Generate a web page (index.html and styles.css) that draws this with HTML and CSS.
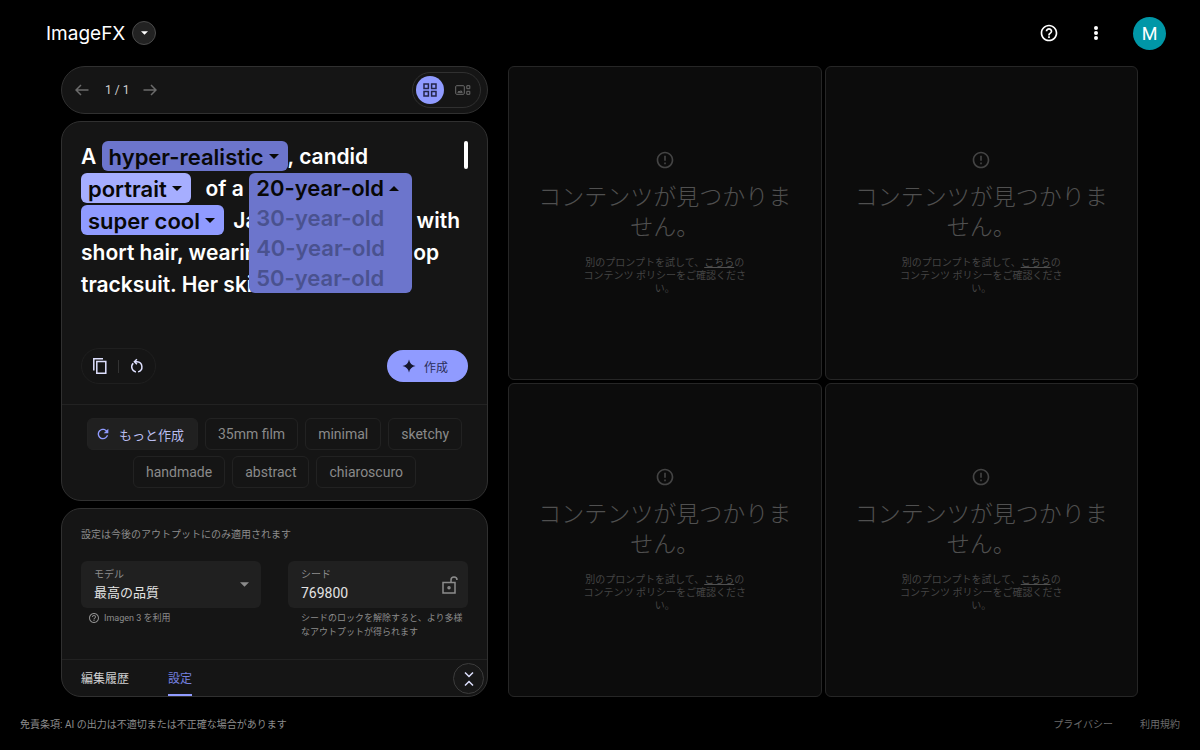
FILE: index.html
```
<!DOCTYPE html>
<html lang="ja">
<head>
	<meta charset="UTF-8">
	<meta name="viewport" content="width=device-width, initial-scale=1">
	<title>ImageFX</title>
	<link rel="stylesheet" href="styles.css">
</head>
<body>
	<!-- shared icons -->
	<svg class="sprite" width="0" height="0" aria-hidden="true">
		<symbol id="caret" viewBox="0 0 10 5"><path d="M0 0h10L5 5z"/></symbol>
		<symbol id="help" viewBox="0 0 24 24"><path d="M11 18h2v-2h-2v2zm1-16C6.480 2 2 6.480 2 12s4.480 10 10 10 10-4.480 10-10S17.520 2 12 2zm0 18c-4.410 0-8-3.590-8-8s3.590-8 8-8 8 3.590 8 8-3.590 8-8 8zm0-14c-2.210 0-4 1.790-4 4h2c0-1.100.9-2 2-2s2 .9 2 2c0 2-3 1.750-3 5h2c0-2.250 3-2.500 3-5 0-2.210-1.790-4-4-4z"/></symbol>
		<symbol id="error" viewBox="0 0 24 24"><path d="M11 15h2v2h-2zm0-8h2v6h-2zm1-5C6.470 2 2 6.500 2 12s4.470 10 10 10 10-4.480 10-10S17.520 2 12 2zm0 18c-4.420 0-8-3.580-8-8s3.580-8 8-8 8 3.580 8 8-3.580 8-8 8z"/></symbol>
	</svg>

	<header class="header">
		<span class="logo">ImageFX</span>
		<button class="logo-menu" aria-label="ツールを切り替え"><svg width="7" height="4"><use href="#caret"/></svg></button>
		<div class="header-right">
			<button class="icon-btn" aria-label="ヘルプ"><svg width="20" height="20"><use href="#help"/></svg></button>
			<button class="icon-btn" aria-label="メニュー">
				<svg width="20" height="20" viewBox="0 0 20 20"><circle cx="10" cy="5" r="2"/><circle cx="10" cy="10" r="2"/><circle cx="10" cy="15" r="2"/></svg>
			</button>
			<button class="avatar">M</button>
		</div>
	</header>

	<main class="main">
		<div class="side">
			<div class="card pager">
				<button class="icon-btn" aria-label="前へ">
					<svg class="line" width="14" height="14" viewBox="0 0 14 14"><path d="M13.500 7H1.200M6 2L1 7l5 5"/></svg>
				</button>
				<span class="count">1 / 1</span>
				<button class="icon-btn" aria-label="次へ">
					<svg class="line" width="14" height="14" viewBox="0 0 14 14"><path d="M.5 7h12.300M8 2l5 5-5 5"/></svg>
				</button>
				<div class="view">
					<button class="view-btn active" aria-label="グリッド表示">
						<svg class="line" width="14" height="14" viewBox="0 0 14 14"><path d="M1 1h4.400v4.400H1zM8.600 1H13v4.400H8.600zM1 8.600h4.400V13H1zM8.600 8.600H13V13H8.600z"/></svg>
					</button>
					<button class="view-btn" aria-label="詳細表示">
						<svg class="line thin" width="16" height="10" viewBox="0 0 16 10"><rect x=".7" y=".7" width="8.600" height="8.600" rx="1"/><path d="M11.800.7h3v3h-3zM11.800 6.300h3v3h-3zM2.800 7.300l1.200-1.200.9.8 1-1.200 1.400 1.600z"/></svg>
					</button>
				</div>
			</div>

			<section class="card prompt-card">
				<div class="prompt">
					<div class="prompt-text">
						A <span class="pick dim"><select aria-label="スタイル"><option>hyper-realistic</option></select><svg width="10" height="5"><use href="#caret"/></svg></span>, candid<br>
						<span class="pick light"><select aria-label="種類"><option>portrait</option></select><svg width="10" height="5"><use href="#caret"/></svg></span>&nbsp; of a
						<span class="open">
							<button class="open-btn" aria-haspopup="listbox" aria-expanded="true">20-year-old<svg class="up" width="10" height="5"><use href="#caret"/></svg></button>
							<ul class="menu" role="listbox" aria-label="年齢">
								<li role="option">30-year-old</li>
								<li role="option">40-year-old</li>
								<li role="option">50-year-old</li>
							</ul>
						</span><br>
						<span class="pick"><select aria-label="雰囲気"><option>super cool</option></select><svg width="10" height="5"><use href="#caret"/></svg></span>&nbsp;Japanese woman with<br>
						short hair, wearing a bright hip-hop<br>
						tracksuit. Her skin is
					</div>
					<div class="thumb"></div>
				</div>

				<div class="actions">
					<div class="tools">
						<button class="icon-btn" aria-label="コピー">
							<svg class="line" width="16" height="18" viewBox="0 0 16 18"><path d="M1.800 13.500V1.800H11M4.800 4.500h9v11.700h-9z"/></svg>
						</button>
						<span class="sep"></span>
						<button class="icon-btn" aria-label="リセット">
							<svg class="line" width="16" height="16" viewBox="0 0 16 16"><path d="M4.200 5.200A5.200 5.200 0 0 0 6.900 13.900M9.100 13.900A5.200 5.200 0 0 0 8 3.700H5.800M7.900 1.200L5.400 3.700l2.500 2.500"/></svg>
						</button>
					</div>
					<button class="create">
						<svg width="14" height="14" viewBox="0 0 14 14"><path d="M7 .5Q8 6 13.500 7 8 8 7 13.500 6 8 .5 7 6 6 7 .5z"/></svg>
						作成
					</button>
				</div>

				<div class="chips">
					<button class="chip more">
						<svg width="16" height="16" viewBox="0 0 24 24"><path d="M17.650 6.350C16.200 4.900 14.210 4 12 4c-4.420 0-7.990 3.580-7.990 8s3.570 8 7.990 8c3.730 0 6.840-2.550 7.730-6h-2.080c-.82 2.330-3.040 4-5.650 4-3.310 0-6-2.690-6-6s2.690-6 6-6c1.660 0 3.140.69 4.220 1.780L13 11h7V4l-2.350 2.350z"/></svg>
						もっと作成
					</button>
					<button class="chip">35mm film</button>
					<button class="chip">minimal</button>
					<button class="chip">sketchy</button>
					<button class="chip">handmade</button>
					<button class="chip">abstract</button>
					<button class="chip">chiaroscuro</button>
				</div>
			</section>

			<section class="card settings">
				<p class="note">設定は今後のアウトプットにのみ適用されます</p>
				<div class="fields">
					<div>
						<div class="field">
							<label for="model">モデル</label>
							<select id="model"><option>最高の品質</option></select>
							<svg class="field-icon" width="9" height="5"><use href="#caret"/></svg>
						</div>
						<p class="hint"><svg width="12" height="12"><use href="#help"/></svg>Imagen 3 を利用</p>
					</div>
					<div>
						<div class="field">
							<label for="seed">シード</label>
							<input id="seed" type="text" value="769800">
							<button class="icon-btn field-icon" aria-label="シードのロックを解除">
								<svg class="line" width="18" height="20" viewBox="0 0 18 20"><path d="M2 7.500h12V18H2zM10 7.500V5a3 3 0 0 1 6 0"/><circle cx="8" cy="12.700" r="1"/></svg>
							</button>
						</div>
						<p class="hint seed-hint">シードのロックを解除すると、より多様なアウトプットが得られます</p>
					</div>
				</div>
				<div class="tabs">
					<button class="tab">編集履歴</button>
					<button class="tab active">設定</button>
					<button class="collapse" aria-label="閉じる">
						<svg class="line" width="10" height="16" viewBox="0 0 10 16"><path d="M1 1.500l4 4 4-4M1 14.500l4-4 4 4"/></svg>
					</button>
				</div>
			</section>
		</div>

		<div class="results">
			<article class="result">
				<svg width="20" height="20"><use href="#error"/></svg>
				<h2>コンテンツが見つかりません。</h2>
				<p>別のプロンプトを試して、<a href="#">こちら</a>のコンテンツ ポリシーをご確認ください。</p>
			</article>
			<article class="result">
				<svg width="20" height="20"><use href="#error"/></svg>
				<h2>コンテンツが見つかりません。</h2>
				<p>別のプロンプトを試して、<a href="#">こちら</a>のコンテンツ ポリシーをご確認ください。</p>
			</article>
			<article class="result">
				<svg width="20" height="20"><use href="#error"/></svg>
				<h2>コンテンツが見つかりません。</h2>
				<p>別のプロンプトを試して、<a href="#">こちら</a>のコンテンツ ポリシーをご確認ください。</p>
			</article>
			<article class="result">
				<svg width="20" height="20"><use href="#error"/></svg>
				<h2>コンテンツが見つかりません。</h2>
				<p>別のプロンプトを試して、<a href="#">こちら</a>のコンテンツ ポリシーをご確認ください。</p>
			</article>
		</div>
	</main>

	<footer class="footer">
		<span>免責条項: AI の出力は不適切または不正確な場合があります</span>
		<nav>
			<a href="#">プライバシー</a>
			<a href="#">利用規約</a>
		</nav>
	</footer>
</body>
</html>
```
FILE: styles.css
```
* {
	box-sizing: border-box;
}
body {
	display: flex;
	flex-direction: column;
	min-height: 100vh;
	margin: 0;
	background: #000;
	color: #e3e3e3;
	font-family: Roboto, "Noto Sans CJK JP", sans-serif;
	font-size: 10px;
}
button, select, input {
	margin: 0;
	padding: 0;
	border: none;
	background: none;
	color: inherit;
	font: inherit;
}
select {
	appearance: none;
}
p, h2, ul {
	margin: 0;
	padding: 0;
}
svg {
	display: block;
	flex: none;
	fill: currentColor;
}
.sprite {
	position: absolute;
}
.line {
	fill: none;
	stroke: currentColor;
	stroke-width: 1.5;
}
.thin {
	stroke-width: 1;
}
.icon-btn {
	display: flex;
}

/* header */
.header {
	display: flex;
	align-items: center;
	height: 66px;
	padding: 0 34px 0 46px;
}
.logo {
	color: #fff;
	font-family: Inter, sans-serif;
	font-size: 19px;
	font-weight: 400;
}
.logo-menu {
	display: flex;
	align-items: center;
	justify-content: center;
	width: 24px;
	height: 24px;
	margin-left: 7px;
	border: 1px solid #4a4a4a;
	border-radius: 50%;
	background: #222;
	color: #fff;
}
.header-right {
	display: flex;
	align-items: center;
	gap: 27px;
	margin-left: auto;
	color: #fff;
}
.avatar {
	width: 33px;
	height: 33px;
	border-radius: 50%;
	background: #0097a7;
	font-size: 18px;
}

/* columns */
.main {
	display: grid;
	flex: 1;
	grid-template-columns: minmax(0, 427fr) minmax(0, 630fr);
	gap: 20px;
	padding: 0 62px 0 61px;
}
.side {
	display: flex;
	flex-direction: column;
	gap: 7px;
}
.card {
	border: 1px solid #303030;
	border-radius: 20px;
	background: #151515;
}

/* pager */
.pager {
	display: flex;
	align-items: center;
	padding: 5px 6px 5px 13px;
	border-radius: 24px;
	color: #6b6b6b;
}
.count {
	margin: 0 14px 0 16px;
	color: #d0d0d0;
	font-size: 12px;
}
.view {
	display: flex;
	gap: 5px;
	margin-left: auto;
	padding: 3px;
	border: 1px solid #303030;
	border-radius: 18px;
}
.view-btn {
	display: flex;
	align-items: center;
	justify-content: center;
	width: 28px;
	height: 28px;
	border-radius: 50%;
}
.view-btn.active {
	background: #909bff;
	color: #23264a;
}

/* prompt */
.prompt-card {
	display: flex;
	flex: 1;
	flex-direction: column;
}
.prompt {
	display: flex;
	flex: 1;
	padding: 19px;
}
.prompt-text {
	flex: 1;
	width: 0;
	color: #fff;
	font-family: Inter, sans-serif;
	font-size: 21px;
	font-weight: 600;
	line-height: 32px;
	white-space: nowrap;
}
.thumb {
	width: 4px;
	height: 28px;
	border-radius: 2px;
	background: #fff;
}
.pick {
	display: inline-flex;
	align-items: center;
	height: 30px;
	border-radius: 6px;
	background: #909bff;
	color: #080808;
	font-size: 22px;
	vertical-align: top;
}
.pick select {
	height: 30px;
	padding: 0 24px 0 7px;
}
.pick svg {
	margin-left: -19px;
	margin-right: 9px;
	pointer-events: none;
}
.pick + .pick, .pick:not(.dim) {
	margin-right: 4px;
}
.pick.dim {
	background: #6c75cc;
}
.pick.light {
	background: #a6aeff;
}
.open {
	position: relative;
	display: inline-block;
	height: 30px;
	color: #080808;
	font-size: 22px;
	vertical-align: top;
}
.open-btn {
	display: flex;
	align-items: center;
	gap: 5px;
	height: 30px;
	padding: 0 13px 0 7px;
	border-radius: 6px 6px 0 0;
	background: #6c75cc;
}
.up {
	transform: rotate(180deg);
}
.menu {
	position: absolute;
	top: 30px;
	left: 0;
	right: 0;
	padding-left: 7px;
	border-radius: 0 0 6px 6px;
	background: #6c75cc;
	color: #4a528f;
	line-height: 30px;
	list-style: none;
}
.actions {
	display: flex;
	align-items: center;
	justify-content: space-between;
	padding: 0 19px 20px;
}
.tools {
	display: flex;
	align-items: center;
	gap: 10px;
	padding: 8px 10px;
	border: 1px solid #1f1f1f;
	border-radius: 18px;
	color: #dfe1ff;
}
.sep {
	width: 1px;
	height: 13px;
	background: #333;
}
.create {
	display: flex;
	align-items: center;
	gap: 8px;
	height: 32px;
	padding: 0 20px 0 15px;
	border-radius: 16px;
	background: #909bff;
	color: #2b2e58;
	font-size: 12px;
}
.create svg {
	color: #15172e;
}
.chips {
	display: flex;
	flex-wrap: wrap;
	justify-content: center;
	gap: 6px 7px;
	padding: 13px 20px 12px;
	border-top: 1px solid #222;
}
.chip {
	height: 32px;
	padding: 0 12px;
	border: 1px solid #222;
	border-radius: 6px;
	color: #8a8a8a;
	font-size: 14px;
}
.chip.more {
	display: flex;
	align-items: center;
	gap: 8px;
	padding: 0 13px 0 7px;
	background: #202020;
	color: #b9bdf0;
	font-size: 13px;
}
.more svg {
	color: #909bff;
}

/* settings */
.settings {
	color: #8c8c8c;
}
.note {
	padding: 18px 19px;
	line-height: 16px;
}
.fields {
	display: grid;
	grid-template-columns: 1fr 1fr;
	gap: 27px;
	padding: 0 19px 20px;
}
.field {
	position: relative;
	padding: 6px 13px 5px;
	border-radius: 6px;
	background: #202020;
}
.field label {
	display: block;
	line-height: 15px;
}
.field select, .field input {
	display: block;
	width: 100%;
	height: 21px;
	color: #e3e3e3;
	font-size: 13px;
}
.field input {
	font-size: 14px;
}
.field-icon {
	position: absolute;
	top: 0;
	bottom: 0;
	right: 12px;
	margin: auto 0;
	align-items: center;
	pointer-events: none;
}
.field button.field-icon {
	right: 9px;
	pointer-events: auto;
}
.hint {
	display: flex;
	gap: 4px;
	align-items: center;
	padding: 3px 0 0 7px;
	font-size: 9px;
	line-height: 14px;
}
.seed-hint {
	padding: 3px 0 0 13px;
}
.tabs {
	display: flex;
	gap: 39px;
	padding: 0 3px 0 19px;
	border-top: 1px solid #222;
}
.tab {
	height: 36px;
	border-bottom: 2px solid transparent;
	color: #d0d0d0;
	font-size: 12px;
}
.tab.active {
	border-color: #909bff;
	color: #7681e0;
}
.collapse {
	display: flex;
	align-items: center;
	justify-content: center;
	width: 31px;
	height: 31px;
	margin: 3px 0 0 auto;
	border: 1px solid #3c3c3c;
	border-radius: 50%;
	background: #181818;
	color: #dfe1ff;
}

/* results */
.results {
	display: grid;
	grid-template-columns: 1fr 1fr;
	grid-auto-rows: 1fr;
	gap: 3px;
}
.result {
	display: flex;
	flex-direction: column;
	align-items: center;
	justify-content: center;
	padding: 0 24px 2px;
	border: 1px solid #262626;
	border-radius: 6px;
	background: #0c0c0c;
	color: #444;
	text-align: center;
}
.result h2 {
	margin: 13px 0;
	color: #505050;
	font-size: 23px;
	font-weight: 300;
	line-height: 30px;
}
.result p {
	max-width: 164px;
	line-height: 13px;
}
.result a {
	color: #505050;
}

/* footer */
.footer {
	display: flex;
	align-items: center;
	justify-content: space-between;
	height: 53px;
	padding: 0 20px;
	color: #8c8c8c;
}
.footer nav {
	display: flex;
	gap: 27px;
}
.footer a {
	color: #6b6b6b;
	text-decoration: none;
}
```
